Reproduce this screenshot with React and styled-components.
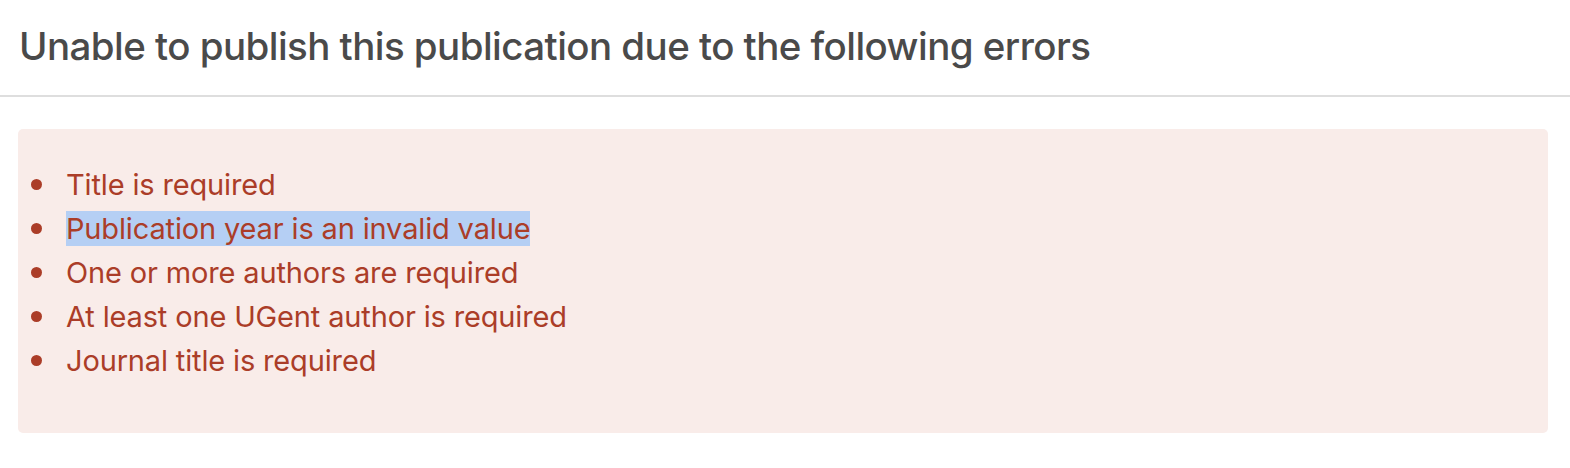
import React from "react";
import styled, { createGlobalStyle } from "styled-components";

const GlobalStyle = createGlobalStyle`
  html, body {
    margin: 0;
    padding: 0;
    background: #ffffff;
    font-family: Inter, "Noto Sans", "Liberation Sans", sans-serif;
  }
`;

const Page = styled.div`
  width: 1570px;
  min-height: 468px;
`;

const Header = styled.div`
  height: 95px;
  display: flex;
  align-items: center;
  padding: 0 19px;
  border-bottom: 2px solid #dedede;
`;

const Title = styled.h1`
  margin: 0 0 4px;
  color: #4a4a4a;
  font-size: 38.5px;
  font-weight: 500;
  line-height: 48px;
  letter-spacing: -0.55px;
`;

const Body = styled.div`
  padding: 32px 22px 0 18px;
`;

const Alert = styled.div`
  background: #f9ece9;
  border-radius: 5px;
  padding: 33px 0 51px;
`;

const ErrorList = styled.ul`
  list-style: none;
  margin: 0;
  padding: 0;
`;

const ErrorItem = styled.li`
  display: flex;
  align-items: center;
  height: 44px;
  color: #ab3d28;
  font-size: 29px;
  letter-spacing: -0.15px;
  &::before {
    content: "";
    flex: none;
    width: 11px;
    height: 11px;
    border-radius: 50%;
    background: #ab3d28;
    margin: 0 24px 0 13px;
  }
`;

const Selected = styled.span`
  background: ${props => (props.selected ? "#b5cff4" : "transparent")};
`;

const errors = [
  "Title is required",
  "Publication year is an invalid value",
  "One or more authors are required",
  "At least one UGent author is required",
  "Journal title is required"
];

export default function App() {
  return (
    <Page>
      <GlobalStyle />
      <Header>
        <Title>Unable to publish this publication due to the following errors</Title>
      </Header>
      <Body>
        <Alert>
          <ErrorList>
            {errors.map((error, i) => (
              <ErrorItem key={error}>
                <Selected selected={i === 1}>{error}</Selected>
              </ErrorItem>
            ))}
          </ErrorList>
        </Alert>
      </Body>
    </Page>
  );
}
